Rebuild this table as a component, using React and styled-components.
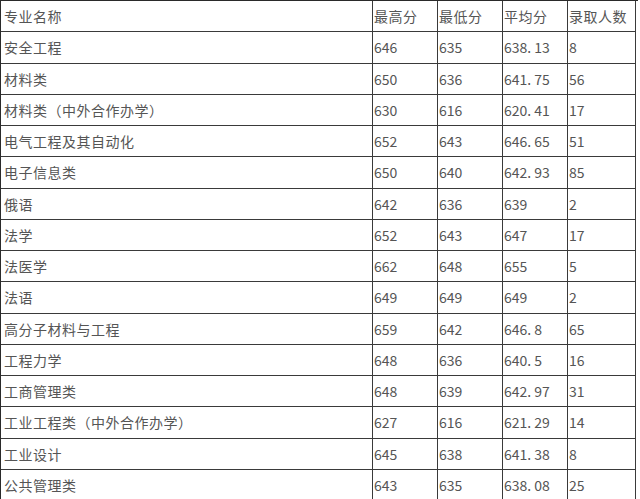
import styled, { createGlobalStyle } from "styled-components";

const GlobalStyle = createGlobalStyle`
  html, body {
    margin: 0;
    padding: 0;
    background: #fff;
  }
`;

const rows = [
  ["安全工程", "646", "635", "638.13", "8"],
  ["材料类", "650", "636", "641.75", "56"],
  ["材料类（中外合作办学）", "630", "616", "620.41", "17"],
  ["电气工程及其自动化", "652", "643", "646.65", "51"],
  ["电子信息类", "650", "640", "642.93", "85"],
  ["俄语", "642", "636", "639", "2"],
  ["法学", "652", "643", "647", "17"],
  ["法医学", "662", "648", "655", "5"],
  ["法语", "649", "649", "649", "2"],
  ["高分子材料与工程", "659", "642", "646.8", "65"],
  ["工程力学", "648", "636", "640.5", "16"],
  ["工商管理类", "648", "639", "642.97", "31"],
  ["工业工程类（中外合作办学）", "627", "616", "621.29", "14"],
  ["工业设计", "645", "638", "641.38", "8"],
  ["公共管理类", "643", "635", "638.08", "25"],
];

const header = ["专业名称", "最高分", "最低分", "平均分", "录取人数"];

const Table = styled.div`
  display: grid;
  grid-template-columns: 372px 65px 65px 65px 68px;
  grid-auto-rows: 31.25px;
  width: 637px;
  border-left: 1px solid #2a2a2a;
  border-top: 1px solid #2a2a2a;
  font-family: "Noto Sans CJK SC", "Noto Sans", sans-serif;
  font-size: 14px;
  color: #555;
`;

const Cell = styled.div`
  display: flex;
  align-items: center;
  padding-left: ${(p) => (p.$first ? "3px" : "1px")};
  border-right: 1px solid #3a3a3a;
  border-bottom: 1px solid #3a3a3a;
  letter-spacing: ${(p) => (p.$num ? "0" : "0.5px")};
  white-space: nowrap;
  overflow: hidden;
  line-height: 1;
`;

const fmt = (v) => v.replace(".", ". ");

export default function App() {
  return (
    <>
      <GlobalStyle />
      <Table>
        {header.map((h, i) => (
          <Cell key={h} $first={i === 0}>
            {h}
          </Cell>
        ))}
        {rows.map((r) =>
          r.map((v, i) => (
            <Cell key={r[0] + i} $first={i === 0} $num={i > 0}>
              {i === 3 ? fmt(v) : v}
            </Cell>
          ))
        )}
      </Table>
    </>
  );
}
